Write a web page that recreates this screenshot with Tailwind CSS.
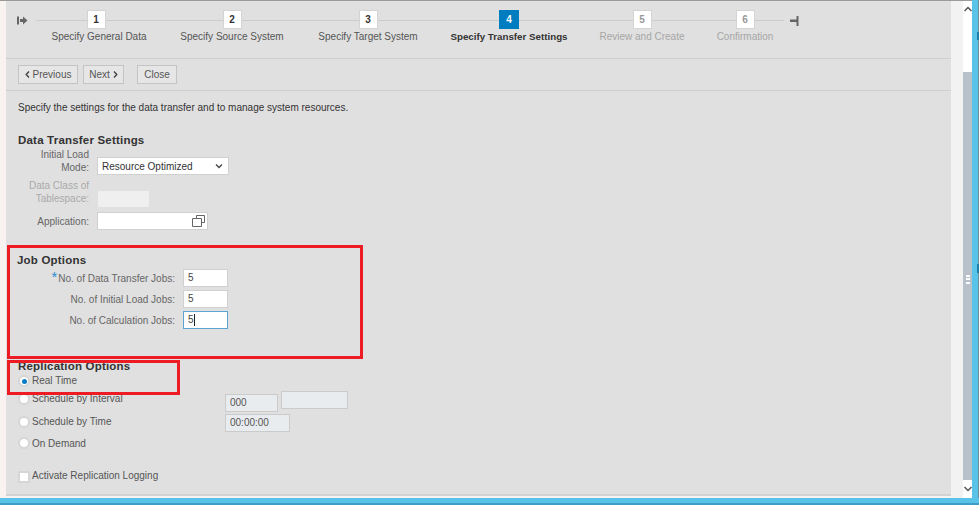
<!DOCTYPE html>
<html><head><meta charset="utf-8"><script src="https://cdn.jsdelivr.net/npm/@tailwindcss/browser@4"></script></head>
<body class="m-0 overflow-hidden">
<div class="relative flex flex-col w-[979px] h-[505px] overflow-hidden bg-[#f7f3f2] font-['Liberation_Sans',Arial,sans-serif] text-[10px] text-[#444]">
  <div class="flex h-[498px] shrink-0">
    <div class="w-[6px] shrink-0 bg-[#f8f2f1] border-t border-t-[#9a9a9a]"></div>
    <div class="w-[945px] shrink-0 mb-[2px] flex flex-col bg-[#e0e0e0] border-t border-t-[#9a9a9a] border-b-2 border-b-[#d2d2d2]">
      <!-- stepper -->
      <div class="relative h-[58px] shrink-0 border-b border-[#cfcfcf]">
        <div class="absolute left-[30px] w-[748px] top-[19px] h-px bg-[#cccccc]"></div>
        <svg class="absolute left-[11px] top-[15px]" width="12" height="9" viewBox="0 0 12 9"><path d="M0 .5h2v8H0zM3 3h3V.5l4.500 4L6 8.500V6H3z" fill="#666"/></svg>
        <svg class="absolute left-[784px] top-[15px]" width="10" height="10" viewBox="0 0 10 10"><path d="M0 3.500h7V6H0zM6.500 0h2v10h-2z" fill="#666"/></svg>
        <div class="absolute left-[40px] top-[9px] flex">
          <div class="w-[106px] flex flex-col items-center"><span class="w-[19px] h-[19px] ml-[-6px] flex items-center justify-center bg-white border border-[#d4d4d4] font-bold text-[#333]">1</span><span class="mt-[1px] h-[14px] leading-[14px] text-[10px] text-[#555] whitespace-nowrap">Specify General Data</span></div>
          <div class="w-[160px] flex flex-col items-center"><span class="w-[19px] h-[19px] flex items-center justify-center bg-white border border-[#d4d4d4] font-bold text-[#333]">2</span><span class="mt-[1px] h-[14px] leading-[14px] text-[10px] text-[#555] whitespace-nowrap">Specify Source System</span></div>
          <div class="w-[112px] flex flex-col items-center"><span class="w-[19px] h-[19px] flex items-center justify-center bg-white border border-[#d4d4d4] font-bold text-[#333]">3</span><span class="mt-[1px] h-[14px] leading-[14px] text-[10px] text-[#555] whitespace-nowrap">Specify Target System</span></div>
          <div class="w-[170px] flex flex-col items-center"><span class="w-[20px] h-[19px] flex items-center justify-center bg-[#007cc0] font-bold text-white">4</span><span class="mt-[1px] h-[14px] leading-[14px] text-[9.75px] font-bold text-[#333] whitespace-nowrap">Specify Transfer Settings</span></div>
          <div class="w-[96px] flex flex-col items-center"><span class="w-[19px] h-[19px] flex items-center justify-center bg-white border border-[#d4d4d4] font-bold text-[#999]">5</span><span class="mt-[1px] h-[14px] leading-[14px] text-[10px] text-[#a6a6a6] whitespace-nowrap">Review and Create</span></div>
          <div class="w-[110px] flex flex-col items-center"><span class="w-[19px] h-[19px] flex items-center justify-center bg-white border border-[#d4d4d4] font-bold text-[#999]">6</span><span class="mt-[1px] h-[14px] leading-[14px] text-[10px] text-[#a6a6a6] whitespace-nowrap">Confirmation</span></div>
        </div>
      </div>
      <!-- toolbar -->
      <div class="h-[32px] shrink-0 flex items-center pl-[12px] border-b border-[#cfcfcf] text-[10px] text-[#555]">
        <button class="h-[19px] w-[60px] flex items-center justify-center gap-[3px] border border-[#c4c4c4] bg-[#e6e6e6]"><svg width="5" height="7" viewBox="0 0 5 7"><path d="M4 .5 1.200 3.500 4 6.500" fill="none" stroke="#444" stroke-width="1.400"/></svg>Previous</button>
        <button class="ml-[5px] h-[19px] w-[41px] flex items-center justify-center gap-[3px] border border-[#c4c4c4] bg-[#e6e6e6]">Next<svg width="5" height="7" viewBox="0 0 5 7"><path d="M1 .5 3.800 3.500 1 6.500" fill="none" stroke="#444" stroke-width="1.400"/></svg></button>
        <button class="ml-[13px] h-[19px] w-[40px] flex items-center justify-center border border-[#c4c4c4] bg-[#e6e6e6]">Close</button>
      </div>
      <p class="ml-[12px] mt-[10px] h-[13px] leading-[13px] text-[10px] text-[#333]">Specify the settings for the data transfer and to manage system resources.</p>
      <!-- data transfer -->
      <h2 class="ml-[12px] mt-[19px] h-[14px] leading-[14px] text-[11.5px] tracking-[0.2px] font-bold text-[#333]">Data Transfer Settings</h2>
      <div class="flex mt-[2px] h-[27px]">
        <div class="w-[83px] text-right leading-[12.500px] text-[10px] text-[#666]">Initial Load<br>Mode:</div>
        <div class="ml-[8px] mt-[8px] w-[132px] h-[18px] bg-white border border-[#d0d0d0] flex items-center justify-between pl-[4px] pr-[5px] text-[10px] text-[#333]">Resource Optimized<svg width="8" height="6" viewBox="0 0 8 6"><path d="M1 1.500 4 4.500 7 1.500" fill="none" stroke="#444" stroke-width="1.300"/></svg></div>
      </div>
      <div class="flex mt-[2px] h-[29px]">
        <div class="w-[83px] pt-[1px] text-right leading-[13px] text-[10px] text-[#aaa]">Data Class of<br>Tablespace:</div>
        <div class="ml-[9px] mt-[13px] w-[51px] h-[16px] bg-[#efefef]"></div>
      </div>
      <div class="flex items-center mt-[5px] h-[18px]">
        <div class="w-[83px] text-right text-[10px] text-[#666]">Application:</div>
        <div class="ml-[8px] w-[111px] h-[18px] bg-white border border-[#d0d0d0] flex items-center justify-end pr-[2px]"><svg width="13" height="12" viewBox="0 0 13 12"><path d="M4.500 3V.5h8v7H9.500M.5 3.500h9v8h-9z" fill="none" stroke="#666"/></svg></div>
      </div>
      <!-- job options -->
      <h2 class="ml-[11px] mt-[23px] h-[14px] leading-[14px] text-[11.5px] tracking-[0.2px] font-bold text-[#333]">Job Options</h2>
      <div class="flex items-center h-[18px] mt-[2px]">
        <div class="w-[169px] text-right text-[10px] text-[#666]"><span class="text-[#2a8fd0] text-[15px] leading-[10px] mr-[1px]">*</span>No. of Data Transfer Jobs:</div>
        <div class="ml-[8px] w-[45px] h-[18px] bg-white border border-[#d0d0d0] pl-[4px] leading-[16px] text-[10px]">5</div>
      </div>
      <div class="flex items-center h-[18px] mt-[3px]">
        <div class="w-[169px] text-right text-[10px] text-[#666]">No. of Initial Load Jobs:</div>
        <div class="ml-[8px] w-[45px] h-[18px] bg-white border border-[#d0d0d0] pl-[4px] leading-[16px] text-[10px]">5</div>
      </div>
      <div class="flex items-center h-[18px] mt-[3px]">
        <div class="w-[169px] text-right text-[10px] text-[#666]">No. of Calculation Jobs:</div>
        <div class="ml-[8px] w-[45px] h-[18px] bg-white border border-[#5aa5d6] pl-[4px] leading-[16px] text-[10px] flex items-center"><span>5</span><span class="w-px h-[12px] bg-[#222]"></span></div>
      </div>
      <!-- replication -->
      <h2 class="ml-[12px] mt-[30px] h-[14px] leading-[14px] text-[11.5px] tracking-[0.2px] font-bold text-[#333]">Replication Options</h2>
      <div class="relative flex-1 text-[10px] text-[#555]">
        <div class="flex items-start gap-[2px] ml-[12px] h-[14px]"><span class="w-[12px] h-[12px] mt-[2px] rounded-full bg-white border-2 border-[#d6d6d6] flex items-center justify-center"><span class="w-[5px] h-[5px] rounded-full bg-[#0a7cc4]"></span></span><span>Real Time</span></div>
        <div class="flex mt-[3px] h-[20px]">
          <div class="flex items-start gap-[2px] ml-[12px] w-[207px]"><span class="w-[12px] h-[12px] mt-[3px] rounded-full bg-white border-2 border-[#d6d6d6]"></span><span class="mt-[1px]">Schedule by Interval</span></div>
          <div class="w-[53px] h-[18px] mt-[4px] bg-[#e9ecef] border border-[#cbcbcb] pl-[4px] leading-[16px] text-[#555]">000</div>
          <div class="ml-[3px] mt-[1px] w-[67px] h-[18px] bg-[#e9ecef] border border-[#cbcbcb]"></div>
        </div>
        <div class="flex mt-[3px] h-[19px]">
          <div class="flex items-start gap-[2px] ml-[12px] w-[207px]"><span class="w-[12px] h-[12px] mt-[3px] rounded-full bg-white border-2 border-[#d6d6d6]"></span><span class="mt-[1px]">Schedule by Time</span></div>
          <div class="w-[65px] h-[18px] mt-[1px] bg-[#e9ecef] border border-[#cbcbcb] pl-[4px] leading-[16px] text-[#555]">00:00:00</div>
        </div>
        <div class="flex items-start gap-[2px] ml-[12px] mt-[3px] h-[14px]"><span class="w-[12px] h-[12px] mt-[2px] rounded-full bg-white border-2 border-[#d6d6d6]"></span><span class="mt-[0.500px]">On Demand</span></div>
        <div class="flex items-start gap-[2px] ml-[12px] mt-[19px]"><span class="w-[12px] h-[12px] mt-[3px] bg-white border-2 border-[#d6d6d6]"></span><span>Activate Replication Logging</span></div>
      </div>
    </div>
    <div class="w-[12px] shrink-0 bg-[#f2f2f2] border-t border-t-[#9a9a9a]"></div>
    <!-- scrollbar -->
    <div class="w-[9px] shrink-0 flex flex-col bg-white border-t border-t-[#9a9a9a]">
      <div class="h-[71px] flex justify-center pt-[5px]"><svg width="8" height="6" viewBox="0 0 8 6"><path d="M.5 5 4 1.500 7.500 5" fill="none" stroke="#555" stroke-width="1.500"/></svg></div>
      <div class="flex-1 bg-[#b8c0ca] flex flex-col items-center justify-center gap-[1.500px] pt-[6px]"><span class="w-[4px] h-[2px] bg-white"></span><span class="w-[4px] h-[2px] bg-white"></span><span class="w-[4px] h-[2px] bg-white"></span></div>
      <div class="h-[18px] flex justify-center items-center"><svg width="8" height="6" viewBox="0 0 8 6"><path d="M.5 1 4 4.500 7.500 1" fill="none" stroke="#555" stroke-width="1.500"/></svg></div>
    </div>
    <div class="w-[6px] shrink-0 bg-[#5ac3e8]"></div>
    <div class="flex-1 flex flex-col bg-[#6f8c9c]"></div>
  </div>
  <div class="flex-1 bg-[#5ac3e8] border-b-2 border-[#3f9cc4]"></div>
  <!-- red annotations -->
  <div class="absolute left-[7px] top-[245px] w-[356px] h-[114px] border-[3px] border-[#ed1c24]"></div>
  <div class="absolute left-[7px] top-[360px] w-[173px] h-[35px] border-[3px] border-[#ed1c24]"></div>
  <!-- window edge marks -->
  <div class="absolute left-[977px] top-[32px] w-[2px] h-[8px] bg-[#1f7ea8]"></div>
  <div class="absolute left-[977px] top-[264px] w-[2px] h-[9px] bg-[#1f7ea8]"></div>
</div>
</body></html>
